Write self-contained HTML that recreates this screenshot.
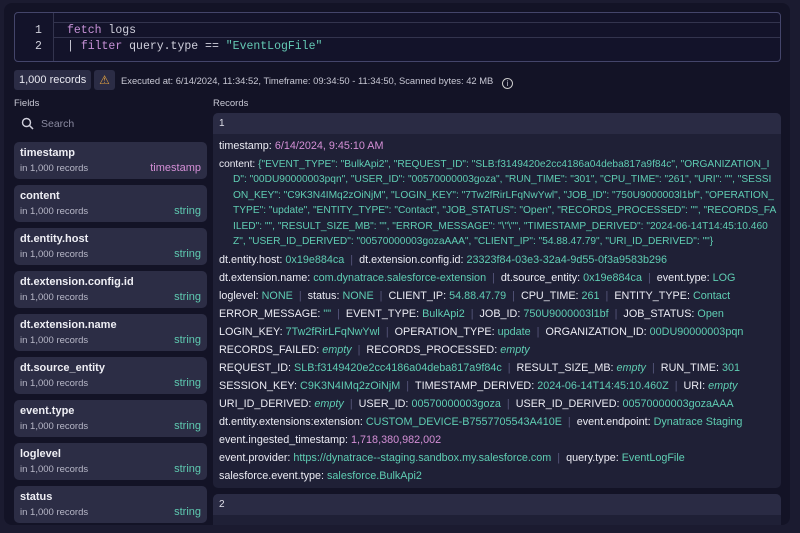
<!DOCTYPE html>
<html><head><style>
*{box-sizing:border-box;margin:0;padding:0}
body{width:800px;height:533px;background:#1b1b30;font-family:"Liberation Sans",sans-serif;overflow:hidden;position:relative;color:#e4e4ee}
.panel{position:absolute;left:4px;top:3px;width:786px;height:522px;background:#131326;border-radius:8px;overflow:hidden}
.ed{position:absolute;left:10px;top:9px;width:767px;height:50px;border:1px solid #44456a;border-radius:4px;background:#13132a}
.gut{position:absolute;left:0;top:0;width:39px;height:48px;border-right:1px solid #33344e}
.hl{position:absolute;left:39px;right:0;top:9px;height:16px;border-top:1px solid #33344e;border-bottom:1px solid #33344e}
.ln{position:absolute;font-family:"Liberation Mono",monospace;font-size:11.5px;color:#d0d0dc}
.kw{color:#c691d6}.str{color:#64c9b4}
.badge{position:absolute;top:67px;height:20px;border-radius:3px;background:#2b2c45;font-size:11px;line-height:20px;padding:0 5px;color:#e8e8f0}
.exec{position:absolute;left:117px;top:72px;font-size:9.4px;color:#c8c8d4}
.lbl{position:absolute;top:95px;font-size:9.5px;color:#c8c8d4}
.card{position:absolute;left:10px;width:193px;height:37px;background:#2c2d45;border-radius:5px}
.card b{position:absolute;left:6px;top:5px;font-size:11px;color:#eeeef4}
.card span{position:absolute;left:6px;top:21px;font-size:9.5px;color:#b8b8c8}
.card i{position:absolute;right:6px;top:20px;font-size:11px;font-style:normal;color:#5ec9b0}
.rec{position:absolute;left:209px;top:110px;width:568px;height:375px;background:#1f2036;border-radius:5px;overflow:hidden}
.rh{height:21px;background:#2a2b44;font-size:10px;line-height:21px;padding-left:6px;color:#e0e0ea}
.row{position:absolute;left:6px;font-size:10.8px;white-space:nowrap;color:#ececf4}
.v{color:#5fcdb3}.p{color:#d48fd6}.e{color:#5fcdb3;font-style:italic}
.s{color:#55567a;margin:0 6px}
.cont{position:absolute;left:6px;top:44px;width:560px;font-size:10.2px;line-height:15.4px;color:#5fcdb3;padding-left:14px;text-indent:-14px;word-break:break-all}
</style></head><body>
<div class="panel">
<div class="ed"><div class="gut"></div><div class="hl"></div>
<div class="ln" style="left:20px;top:11px">1</div><div class="ln" style="left:20px;top:27px">2</div>
<div class="ln" style="left:52px;top:11px"><span class="kw">fetch</span> logs</div>
<div class="ln" style="left:52px;top:27px">| <span class="kw">filter</span> query.type == <span class="str">"EventLogFile"</span></div>
</div>
<div class="badge" style="left:10px">1,000 records</div>
<div class="badge" style="left:90px;width:21px;padding:0;text-align:center;color:#e0a040;font-size:12px">⚠</div>
<div class="exec">Executed at: 6/14/2024, 11:34:52, Timeframe: 09:34:50 - 11:34:50, Scanned bytes: 42 MB <span style="display:inline-block;width:11px;height:11px;border:1px solid #ccc;border-radius:50%;font-size:8px;text-align:center;line-height:9px;margin-left:6px;vertical-align:-2px">i</span></div>
<div class="lbl" style="left:10px">Fields</div><div class="lbl" style="left:209px">Records</div>
<svg style="position:absolute;left:17px;top:114px" width="13" height="13" viewBox="0 0 13 13"><circle cx="5.5" cy="5.5" r="4" fill="none" stroke="#d0d0dc" stroke-width="1.4"/><path d="M8.5 8.5L12 12" stroke="#d0d0dc" stroke-width="1.5"/></svg>
<div style="position:absolute;left:37px;top:115px;font-size:10.5px;color:#8a8aa0">Search</div>
<div class="card" style="top:139px"><b>timestamp</b><span>in 1,000 records</span><i style="color:#d48fd6">timestamp</i></div>
<div class="card" style="top:182px"><b>content</b><span>in 1,000 records</span><i>string</i></div>
<div class="card" style="top:225px"><b>dt.entity.host</b><span>in 1,000 records</span><i>string</i></div>
<div class="card" style="top:268px"><b>dt.extension.config.id</b><span>in 1,000 records</span><i>string</i></div>
<div class="card" style="top:311px"><b>dt.extension.name</b><span>in 1,000 records</span><i>string</i></div>
<div class="card" style="top:354px"><b>dt.source_entity</b><span>in 1,000 records</span><i>string</i></div>
<div class="card" style="top:397px"><b>event.type</b><span>in 1,000 records</span><i>string</i></div>
<div class="card" style="top:440px"><b>loglevel</b><span>in 1,000 records</span><i>string</i></div>
<div class="card" style="top:483px"><b>status</b><span>in 1,000 records</span><i>string</i></div>
<div class="rec"><div class="rh">1</div>
<div class="row" style="top:27px">timestamp: <span class="p">6/14/2024, 9:45:10 AM</span></div>
<div class="cont"><span style="color:#ececf4">content:</span> {"EVENT_TYPE": "BulkApi2", "REQUEST_ID": "SLB:f3149420e2cc4186a04deba817a9f84c", "ORGANIZATION_ID": "00DU90000003pqn", "USER_ID": "00570000003goza", "RUN_TIME": "301", "CPU_TIME": "261", "URI": "", "SESSION_KEY": "C9K3N4IMq2zOiNjM", "LOGIN_KEY": "7Tw2fRirLFqNwYwl", "JOB_ID": "750U9000003l1bf", "OPERATION_TYPE": "update", "ENTITY_TYPE": "Contact", "JOB_STATUS": "Open", "RECORDS_PROCESSED": "", "RECORDS_FAILED": "", "RESULT_SIZE_MB": "", "ERROR_MESSAGE": "\"\"", "TIMESTAMP_DERIVED": "2024-06-14T14:45:10.460Z", "USER_ID_DERIVED": "00570000003gozaAAA", "CLIENT_IP": "54.88.47.79", "URI_ID_DERIVED": ""}</div>
<div class="row" style="top:141px">dt.entity.host: <span class="v">0x19e884ca</span><span class="s">|</span>dt.extension.config.id: <span class="v">23323f84-03e3-32a4-9d55-0f3a9583b296</span></div>
<div class="row" style="top:159px">dt.extension.name: <span class="v">com.dynatrace.salesforce-extension</span><span class="s">|</span>dt.source_entity: <span class="v">0x19e884ca</span><span class="s">|</span>event.type: <span class="v">LOG</span></div>
<div class="row" style="top:177px">loglevel: <span class="v">NONE</span><span class="s">|</span>status: <span class="v">NONE</span><span class="s">|</span>CLIENT_IP: <span class="v">54.88.47.79</span><span class="s">|</span>CPU_TIME: <span class="v">261</span><span class="s">|</span>ENTITY_TYPE: <span class="v">Contact</span></div>
<div class="row" style="top:195px">ERROR_MESSAGE: <span class="v">""</span><span class="s">|</span>EVENT_TYPE: <span class="v">BulkApi2</span><span class="s">|</span>JOB_ID: <span class="v">750U9000003l1bf</span><span class="s">|</span>JOB_STATUS: <span class="v">Open</span></div>
<div class="row" style="top:213px">LOGIN_KEY: <span class="v">7Tw2fRirLFqNwYwl</span><span class="s">|</span>OPERATION_TYPE: <span class="v">update</span><span class="s">|</span>ORGANIZATION_ID: <span class="v">00DU90000003pqn</span></div>
<div class="row" style="top:231px">RECORDS_FAILED: <span class="e">empty</span><span class="s">|</span>RECORDS_PROCESSED: <span class="e">empty</span></div>
<div class="row" style="top:249px">REQUEST_ID: <span class="v">SLB:f3149420e2cc4186a04deba817a9f84c</span><span class="s">|</span>RESULT_SIZE_MB: <span class="e">empty</span><span class="s">|</span>RUN_TIME: <span class="v">301</span></div>
<div class="row" style="top:267px">SESSION_KEY: <span class="v">C9K3N4IMq2zOiNjM</span><span class="s">|</span>TIMESTAMP_DERIVED: <span class="v">2024-06-14T14:45:10.460Z</span><span class="s">|</span>URI: <span class="e">empty</span></div>
<div class="row" style="top:285px">URI_ID_DERIVED: <span class="e">empty</span><span class="s">|</span>USER_ID: <span class="v">00570000003goza</span><span class="s">|</span>USER_ID_DERIVED: <span class="v">00570000003gozaAAA</span></div>
<div class="row" style="top:303px">dt.entity.extensions:extension: <span class="v">CUSTOM_DEVICE-B7557705543A410E</span><span class="s">|</span>event.endpoint: <span class="v">Dynatrace Staging</span></div>
<div class="row" style="top:321px">event.ingested_timestamp: <span class="p">1,718,380,982,002</span></div>
<div class="row" style="top:339px">event.provider: <span class="v">https://dynatrace--staging.sandbox.my.salesforce.com</span><span class="s">|</span>query.type: <span class="v">EventLogFile</span></div>
<div class="row" style="top:357px">salesforce.event.type: <span class="v">salesforce.BulkApi2</span></div>
</div>
<div class="rec" style="top:491px;height:40px"><div class="rh">2</div></div>
</div>
</body></html>
